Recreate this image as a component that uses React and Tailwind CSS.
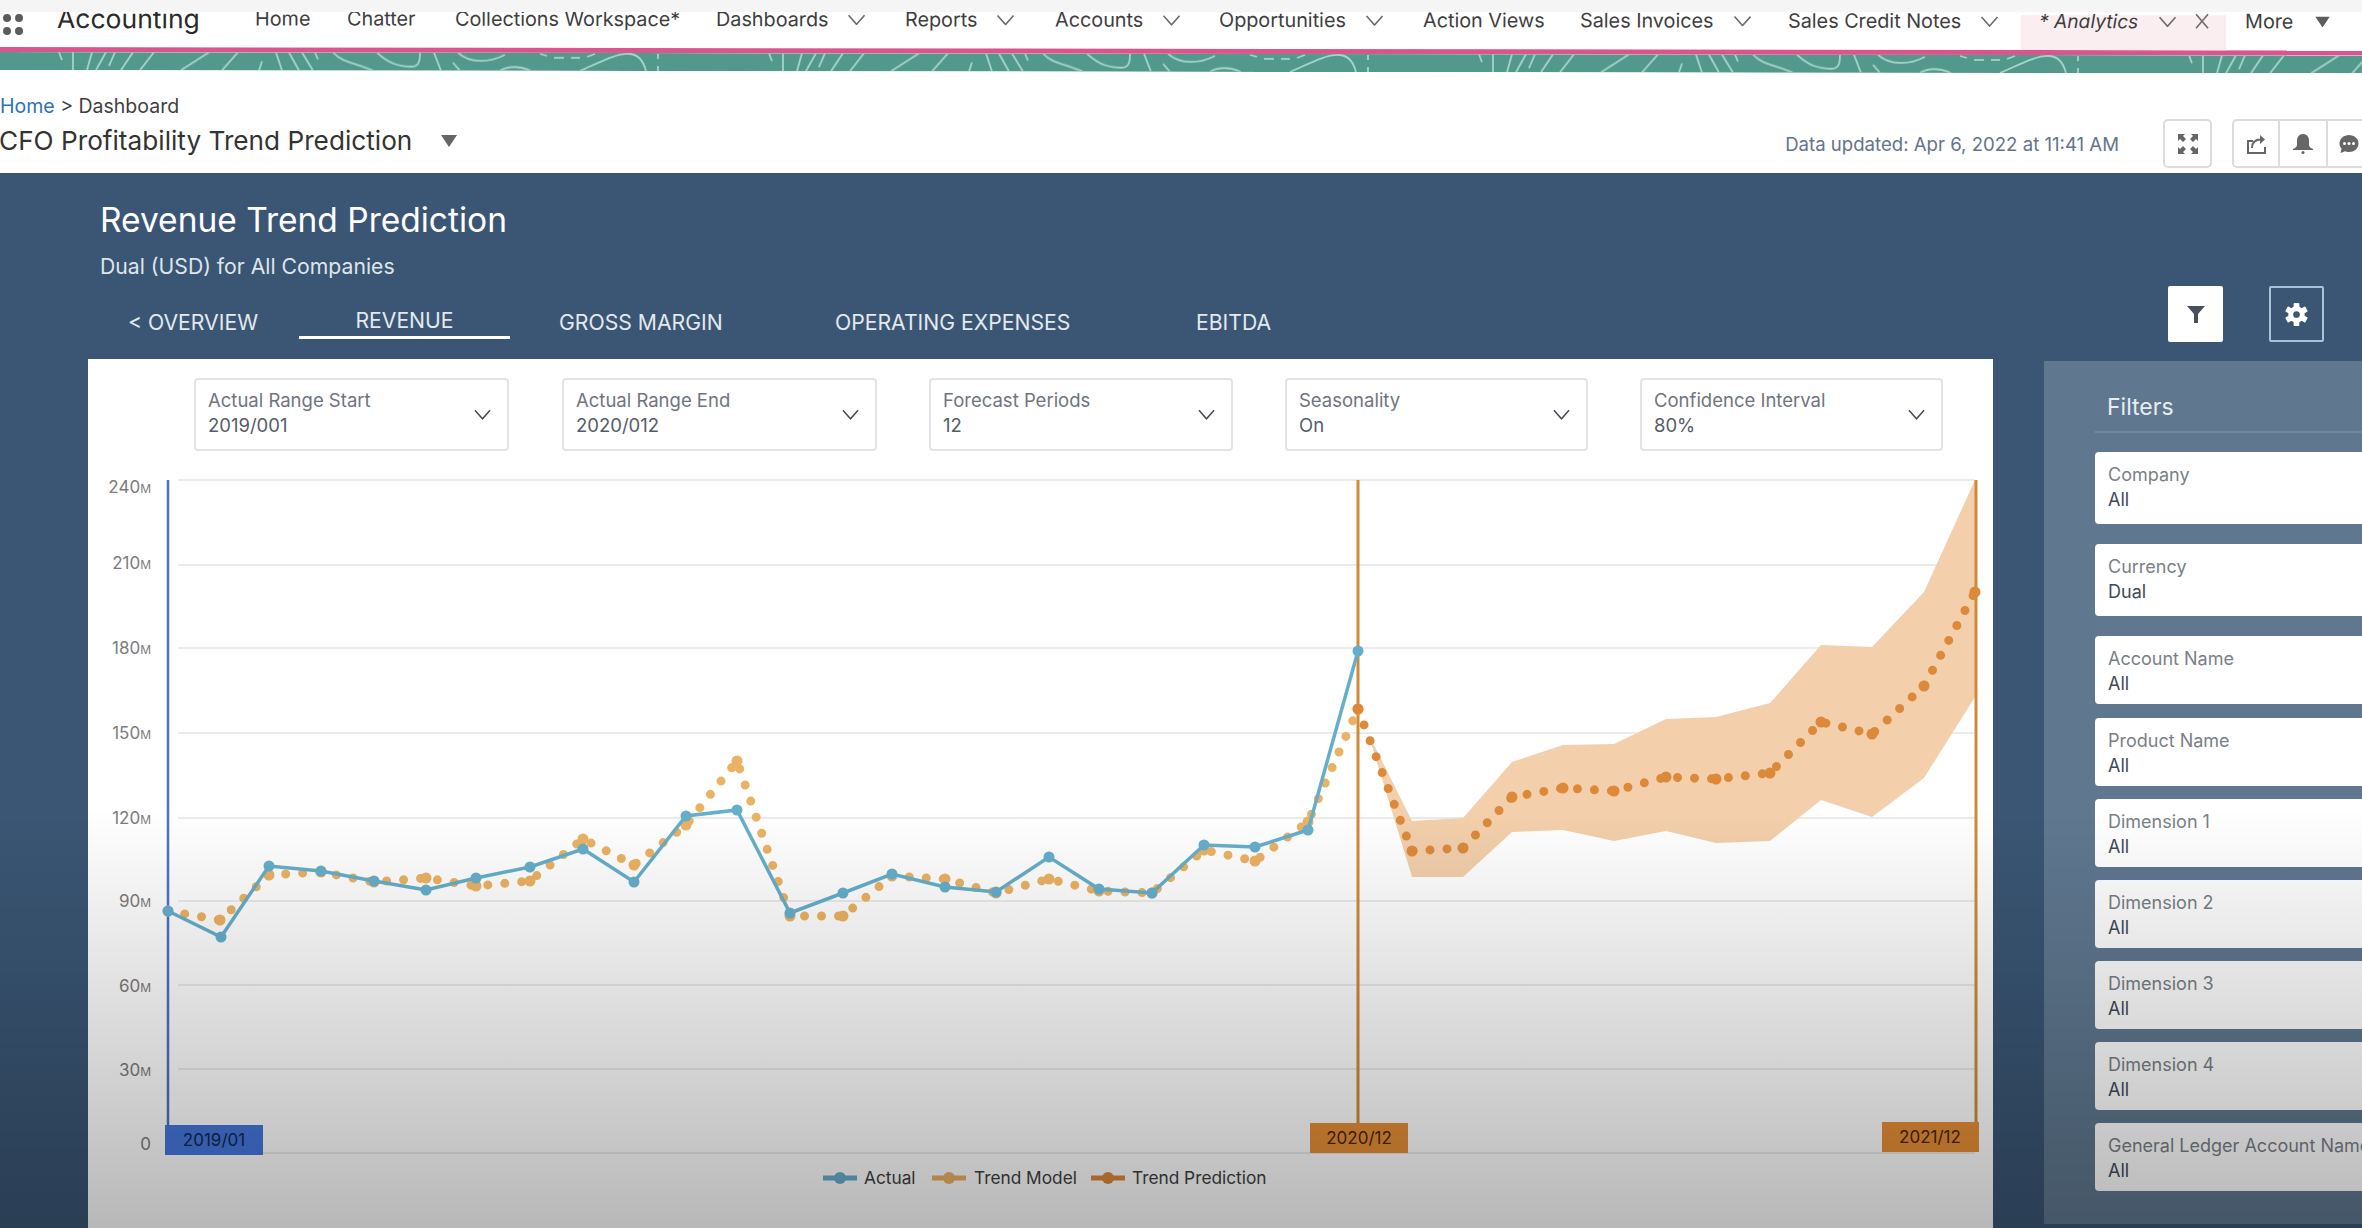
import React from 'react';

const navItems = [
    { label: 'Home', box: 'w-[92px]' },
    { label: 'Chatter', box: 'w-[108px]' },
    { label: 'Collections Workspace*', box: 'w-[261px]' },
    { label: 'Dashboards', box: 'w-[189px]', chev: true },
    { label: 'Reports', box: 'w-[150px]', chev: true },
    { label: 'Accounts', box: 'w-[164px]', chev: true },
    { label: 'Opportunities', box: 'w-[204px]', chev: true },
    { label: 'Action Views', box: 'w-[157px]' },
    { label: 'Sales Invoices', box: 'w-[208px]', chev: true },
    { label: 'Sales Credit Notes', box: 'w-[233px]', chev: true },
];

const selectors = [
    { label: 'Actual Range Start', value: '2019/001', box: 'w-[315px] mr-[53px]' },
    { label: 'Actual Range End', value: '2020/012', box: 'w-[315px] mr-[52px]' },
    { label: 'Forecast Periods', value: '12', box: 'w-[304px] mr-[52px]' },
    { label: 'Seasonality', value: 'On', box: 'w-[303px] mr-[52px]' },
    { label: 'Confidence Interval', value: '80%', box: 'w-[303px]' },
];

const filters = [
    { label: 'Company', value: 'All', box: 'h-[72px] mb-[20px]' },
    { label: 'Currency', value: 'Dual', box: 'h-[72px] mb-[20px]' },
    { label: 'Account Name', value: 'All', box: 'h-[68px] mb-[14px]' },
    { label: 'Product Name', value: 'All', box: 'h-[68px] mb-[13px]' },
    { label: 'Dimension 1', value: 'All', box: 'h-[68px] mb-[13px]' },
    { label: 'Dimension 2', value: 'All', box: 'h-[68px] mb-[13px]' },
    { label: 'Dimension 3', value: 'All', box: 'h-[68px] mb-[13px]' },
    { label: 'Dimension 4', value: 'All', box: 'h-[68px] mb-[13px]' },
    { label: 'General Ledger Account Name', value: 'All', box: 'h-[68px]' },
];

const actual = [[168, 911], [221, 937], [269, 866], [321, 871], [374, 881], [426, 890], [476, 878], [530, 867], [583, 849], [634, 882], [686, 816], [737, 810], [790, 913], [843, 893], [892, 874], [945, 887], [996, 892], [1049, 857], [1099, 889], [1152, 893], [1204, 845], [1255, 847], [1308, 830], [1358, 651]];
const trend = [[168, 911], [220, 920], [269, 875], [321, 872], [374, 882], [426, 878], [476, 886], [530, 881], [583, 839], [634, 865], [686, 825], [737, 761], [790, 916], [843, 916], [892, 876], [945, 879], [996, 893], [1049, 879], [1099, 891], [1152, 893], [1204, 850], [1255, 861], [1308, 822], [1358, 709]];
const prediction = [[1358, 709], [1412, 851], [1463, 848], [1512, 797], [1563, 788], [1614, 791], [1666, 777], [1716, 779], [1770, 773], [1821, 722], [1872, 734], [1924, 686], [1975, 592]];
const bandTop = [[1368, 733], [1412, 821], [1463, 818], [1512, 762], [1563, 745], [1614, 744], [1666, 719], [1716, 717], [1770, 703], [1821, 645], [1872, 647], [1924, 592], [1975, 480]];
const bandBottom = [[1975, 697], [1924, 778], [1872, 817], [1821, 800], [1770, 841], [1716, 843], [1666, 831], [1614, 841], [1563, 830], [1512, 832], [1463, 877], [1412, 877]];
const gridY = [480, 565, 648, 733, 818, 901, 985, 1069, 1153];
const axis = [['240', 487], ['210', 563], ['180', 648], ['150', 733], ['120', 818], ['90', 901], ['60', 986], ['30', 1070]];

const pts = (list) => list.map((p) => p.join(',')).join(' ');

const Chev = ({ className }) => (
    <svg viewBox="0 0 18 11" fill="none" stroke="currentColor" strokeWidth="1.6" className={className}>
        <path d="M1 1 L9 10 L17 1" />
    </svg>
);

const Caret = ({ className }) => (
    <svg viewBox="0 0 16 12" className={className}>
        <path d="M0 0 H16 L8 12 Z" fill="currentColor" />
    </svg>
);

const Banner = () => (
    <svg className="block w-full h-[18px]">
        <defs>
            <pattern id="topo" width="710" height="18" patternUnits="userSpaceOnUse" x="50">
                <g fill="none" stroke="#a5d4ca" strokeWidth="1.800">
                    <path d="M9 0 L12 8" />
                    <path d="M23 0 V18" />
                    <path d="M37 18 L42 0" />
                    <path d="M46 18 L56 0" />
                    <path d="M59 14 L65 0" />
                    <path d="M71 18 L83 0" />
                    <path d="M90 18 L104 0" />
                    <path d="M131 18 L159 0" />
                    <path d="M172 18 L188 0" />
                    <path d="M209 18 L212 9" />
                    <path d="M232 18 L226 0" />
                    <path d="M249 18 L239 0" />
                    <path d="M263 18 L252 0" />
                    <path d="M268 7 L265 0" />
                    <path d="M283 0 C292 10 305 10 323 18" />
                    <path d="M327 0 C340 12 350 14 362 14 C370 14 370 6 370 0" />
                    <path d="M391 18 L384 0" />
                    <path d="M410 18 L403 10" />
                    <path d="M408 0 C420 11 440 10 455 2" />
                    <path d="M450 18 C458 13 470 13 481 18" />
                    <path d="M490 1 L497 3" />
                    <path d="M504 5 L514 5" />
                    <path d="M521 5 L530 5" />
                    <path d="M537 4 L545 1" />
                    <path d="M530 18 C545 12 565 0 580 1 C590 2 594 10 596 18" />
                    <path d="M608 1 V6 M608 13 V18" />
                </g>
            </pattern>
        </defs>
        <rect width="100%" height="18" fill="#53988c" />
        <rect width="100%" height="18" fill="url(#topo)" />
    </svg>
);

const TopNav = () => (
    <div className="mt-[12px] h-[61px] overflow-hidden bg-white">
        <div className="origin-left rotate-[0.085deg]">
            <div className="flex h-[35px] items-start text-[19.800px] leading-[12px] text-[#3e3e3e]">
                <div className="grid w-[57px] shrink-0 -mt-px grid-cols-[12px_8px] gap-y-[5px] pl-[3px] pt-[3px]">
                    <span className="size-[8px] rounded-full bg-[#5c5c5c]" />
                    <span className="size-[8px] rounded-full bg-[#5c5c5c]" />
                    <span className="size-[8px] rounded-full bg-[#5c5c5c]" />
                    <span className="size-[8px] rounded-full bg-[#5c5c5c]" />
                </div>
                <div className="w-[198px] shrink-0 text-[26.500px] leading-[12px] text-[#2b2b2b]">Accounting</div>
                {navItems.map((item) => (
                    <div key={item.label} className={`flex h-[12px] shrink-0 items-center ${item.box}`}>
                        <span>{item.label}</span>
                        {item.chev && <Chev className="ml-[19px] w-[19px] h-[11px] text-[#6b6b6b]" />}
                    </div>
                ))}
                <div className="h-[35px] w-[205px] shrink-0 bg-[#fbeef1] pl-[18px]">
                    <div className="flex h-[12px] items-center">
                        <span className="text-[19.200px] italic">* Analytics</span>
                        <Chev className="ml-[20px] w-[19px] h-[11px] text-[#6b6b6b]" />
                        <svg viewBox="0 0 14 16" fill="none" stroke="#6b6b6b" strokeWidth="1.600" className="ml-[18px] w-[14px] h-[16px]">
                            <path d="M1 1 L13 15 M13 1 L1 15" />
                        </svg>
                    </div>
                </div>
                <div className="ml-[19px] flex h-[12px] shrink-0 items-center">
                    <span>More</span>
                    <Caret className="ml-[22px] w-[15px] h-[11px] text-[#5c5c5c]" />
                </div>
            </div>
            <div className="h-[5px] bg-[#d9558c]" />
            <Banner />
        </div>
    </div>
);

const PageHeader = () => (
    <div className="flex h-[100px] justify-between overflow-hidden bg-white">
        <div className="pt-[21px]">
            <div className="text-[19.500px] leading-[24px] text-[#3e3e3e]">
                <span className="text-[#2f72b5]">Home</span> &gt; Dashboard
            </div>
            <div className="mt-[6px] flex items-center text-[26.200px] leading-[34px] text-[#333]">
                <span className="-ml-px">CFO Profitability Trend Prediction</span>
                <Caret className="ml-[29px] w-[16px] h-[12px] text-[#666]" />
            </div>
        </div>
        <div className="-mr-[18px] flex items-start pt-[46px]">
            <span className="mt-[13px] text-[18.600px] leading-[24px] text-[#64748b]">Data updated: Apr 6, 2022 at 11:41 AM</span>
            <div className="ml-[44px] flex size-[49px] items-center justify-center rounded-[5px] border-2 border-[#dcdcdc]">
                <svg viewBox="0 0 20 20" className="w-[20px] h-[20px]" fill="#666">
                    <path d="M0 0 H7 L5 2 L8 5 L5 8 L2 5 L0 7 Z" />
                    <path d="M20 0 V7 L18 5 L15 8 L12 5 L15 2 L13 0 Z" />
                    <path d="M0 20 V13 L2 15 L5 12 L8 15 L5 18 L7 20 Z" />
                    <path d="M20 20 H13 L15 18 L12 15 L15 12 L18 15 L20 13 Z" />
                </svg>
            </div>
            <div className="ml-[20px] flex h-[49px] rounded-[5px] border-2 border-[#dcdcdc]">
                <div className="flex w-[46px] items-center justify-center border-r-2 border-[#dcdcdc]">
                    <svg viewBox="0 0 20 20" className="w-[20px] h-[20px]" fill="none" stroke="#666" strokeWidth="2">
                        <path d="M7 7 H2 V19 H19 V13" />
                        <path d="M6 14 C6 8 10 5.500 15 5.500" />
                        <path d="M14 1 L19 5.500 L14 10 Z" fill="#666" stroke="none" />
                    </svg>
                </div>
                <div className="flex w-[48px] items-center justify-center border-r-2 border-[#dcdcdc]">
                    <svg viewBox="0 0 20 20" className="w-[20px] h-[20px]" fill="#666">
                        <path d="M10 0 C6 0 4 3 4 7 V11 C4 13 2 14 0 15 V16 H20 V15 C18 14 16 13 16 11 V7 C16 3 14 0 10 0 Z" />
                        <circle cx="10" cy="18.500" r="1.500" />
                    </svg>
                </div>
                <div className="flex w-[50px] items-center pl-[11px]">
                    <svg viewBox="0 0 20 20" className="w-[20px] h-[20px]">
                        <path d="M10 1 C15 1 19.500 4.500 19.500 9.500 C19.500 14.500 15 18 10 18 C8.500 18 7 17.700 6 17.200 L1.500 19 L2.500 14.500 C1 13 0.500 11.500 0.500 9.500 C0.500 4.500 5 1 10 1 Z" fill="#666" />
                        <circle cx="5.500" cy="9.500" r="1.500" fill="#fff" />
                        <circle cx="10" cy="9.500" r="1.500" fill="#fff" />
                        <circle cx="14.500" cy="9.500" r="1.500" fill="#fff" />
                    </svg>
                </div>
            </div>
        </div>
    </div>
);

const Chart = () => (
    <svg viewBox="88 470 1905 758" className="mt-[19px] block w-[1905px] h-[758px]">
        {gridY.map((y) => (
            <line key={y} x1="178" x2="1975" y1={y} y2={y} stroke="#ebebeb" strokeWidth="2" />
        ))}
        {axis.map(([num, y]) => (
            <text key={num} x="151" y={y + 6} textAnchor="end" fill="#7c7c7c" fontSize="17">
                {num}<tspan fontSize="12">M</tspan>
            </text>
        ))}
        <text x="151" y="1150" textAnchor="end" fill="#7c7c7c" fontSize="17">0</text>

        <polygon points={pts([...bandTop, ...bandBottom])} fill="#f3cfab" />

        <line x1="168" x2="168" y1="480" y2="1126" stroke="#4a72c8" strokeWidth="2.500" />
        <line x1="1358" x2="1358" y1="480" y2="1124" stroke="#d08a3a" strokeWidth="3" />
        <line x1="1976" x2="1976" y1="480" y2="1124" stroke="#d08a3a" strokeWidth="3" />

        <polyline points={pts(trend)} fill="none" stroke="#ecb263" strokeWidth="9" strokeLinecap="round" strokeDasharray="0 17" />
        {trend.map(([x, y]) => (
            <circle key={x} cx={x} cy={y} r="5.500" fill="#ecb263" />
        ))}
        <polyline points={pts(actual)} fill="none" stroke="#66afcb" strokeWidth="3.500" />
        {actual.map(([x, y]) => (
            <circle key={x} cx={x} cy={y} r="5.500" fill="#66afcb" />
        ))}
        <polyline points={pts(prediction)} fill="none" stroke="#dc8a3a" strokeWidth="9" strokeLinecap="round" strokeDasharray="0 17" />
        {prediction.map(([x, y]) => (
            <circle key={x} cx={x} cy={y} r="5.500" fill="#dc8a3a" />
        ))}

        <rect x="165" y="1125" width="98" height="30" fill="#4577dc" />
        <text x="214" y="1146" textAnchor="middle" fontSize="17" fill="#10264f">2019/01</text>
        <rect x="1310" y="1123" width="98" height="30" fill="#e68f36" />
        <text x="1359" y="1144" textAnchor="middle" fontSize="17" fill="#4a2408">2020/12</text>
        <rect x="1882" y="1122" width="97" height="30" fill="#e68f36" />
        <text x="1930" y="1143" textAnchor="middle" fontSize="17" fill="#4a2408">2021/12</text>

        <g fontSize="17.300" fill="#3e3e3e">
            <line x1="823" x2="857" y1="1178" y2="1178" stroke="#66afcb" strokeWidth="5" />
            <circle cx="840" cy="1178" r="6" fill="#66afcb" />
            <text x="864" y="1184">Actual</text>
            <line x1="932" x2="966" y1="1178" y2="1178" stroke="#ecb263" strokeWidth="5" />
            <circle cx="949" cy="1178" r="6" fill="#ecb263" />
            <text x="974" y="1184">Trend Model</text>
            <line x1="1091" x2="1125" y1="1178" y2="1178" stroke="#dc8a3a" strokeWidth="5" />
            <circle cx="1108" cy="1178" r="6" fill="#dc8a3a" />
            <text x="1132" y="1184">Trend Prediction</text>
        </g>
    </svg>
);

const DashboardPanel = () => (
    <div className="flex flex-1 flex-col bg-[#3a5674]">
        <div className="flex h-[186px] justify-between">
            <div className="pt-[26px]">
                <h1 className="pl-[100px] text-[33.500px] leading-[42px] text-white">Revenue Trend Prediction</h1>
                <p className="mt-[12px] pl-[100px] text-[21.200px] leading-[26px] text-[#dfe5eb]">Dual (USD) for All Companies</p>
                <div className="mt-[22px] flex h-[38px] items-start text-[21.200px] leading-[26px] text-[#e4e9ee]">
                    <div className="ml-[128px] w-[171px] pt-[8px]">&lt; OVERVIEW</div>
                    <div className="h-[38px] w-[211px] border-b-[3px] border-white pt-[6px] text-center">REVENUE</div>
                    <div className="ml-[49px] w-[276px] pt-[8px]">GROSS MARGIN</div>
                    <div className="w-[361px] pt-[8px]">OPERATING EXPENSES</div>
                    <div className="pt-[8px]">EBITDA</div>
                </div>
            </div>
            <div className="flex items-end gap-[46px] pb-[17px] pr-[38px]">
                <div className="flex h-[56px] w-[55px] items-center justify-center rounded-[2px] bg-white">
                    <svg viewBox="0 0 18 17" className="w-[18px] h-[17px]" fill="#474f5e">
                        <path d="M0 0 H18 L11 8 V17 H7 V8 Z" />
                    </svg>
                </div>
                <div className="flex h-[56px] w-[55px] items-center justify-center rounded-[2px] border-2 border-[#a9c2d9]">
                    <svg viewBox="-12 -12 24 24" className="w-[23px] h-[23px]">
                        <circle r="8.500" fill="#fff" />
                        {[0, 60, 120, 180, 240, 300].map((deg) => (
                            <rect key={deg} x="-3" y="-12" width="6" height="6" rx="1" fill="#fff" transform={`rotate(${deg})`} />
                        ))}
                        <circle r="3.500" fill="#3a5674" />
                    </svg>
                </div>
            </div>
        </div>
        <div className="flex flex-1 pl-[88px]">
            <div className="w-[1905px] shrink-0 bg-white">
                <div className="flex pl-[106px] pt-[19px]">
                    {selectors.map((s) => (
                        <div key={s.label} className={`flex h-[73px] shrink-0 items-center justify-between rounded-[4px] border-2 border-[#e2e4e8] pl-[12px] pr-[16px] ${s.box}`}>
                            <div className="pb-[3px]">
                                <div className="text-[18.500px] leading-[25px] text-[#6f7480]">{s.label}</div>
                                <div className="text-[18.500px] leading-[25px] text-[#555c68]">{s.value}</div>
                            </div>
                            <Chev className="w-[17px] h-[11px] text-[#444b57]" />
                        </div>
                    ))}
                </div>
                <Chart />
            </div>
            <div className="mb-[4px] ml-[51px] mt-[2px] flex-1 overflow-hidden bg-[#5f7890]">
                <div className="ml-[63px] mt-[31px] text-[23px] leading-[30px] text-[#e8edf2]">Filters</div>
                <div className="ml-[51px] mt-[9px] h-[2px] bg-[#6f8aa2]" />
                <div className="ml-[51px] mt-[19px] w-[340px]">
                    {filters.map((f) => (
                        <div key={f.label} className={`whitespace-nowrap rounded-[4px] bg-white pl-[13px] pt-[11px] ${f.box}`}>
                            <div className="text-[18px] leading-[24px] text-[#7a7f87]">{f.label}</div>
                            <div className="text-[18px] leading-[25px] text-[#3e4a59]">{f.value}</div>
                        </div>
                    ))}
                </div>
            </div>
        </div>
    </div>
);

const App = () => {
    return (
        <div className="relative flex h-[1228px] w-[2362px] flex-col overflow-hidden bg-[#f5f5f5] font-['Inter','Liberation_Sans',sans-serif]">
            <TopNav />
            <PageHeader />
            <DashboardPanel />
            {/* the video frame darkens towards the bottom */}
            <div className="pointer-events-none absolute inset-x-0 bottom-0 top-[810px] bg-linear-to-b from-transparent to-black/28" />
        </div>
    );
};

export default App;
